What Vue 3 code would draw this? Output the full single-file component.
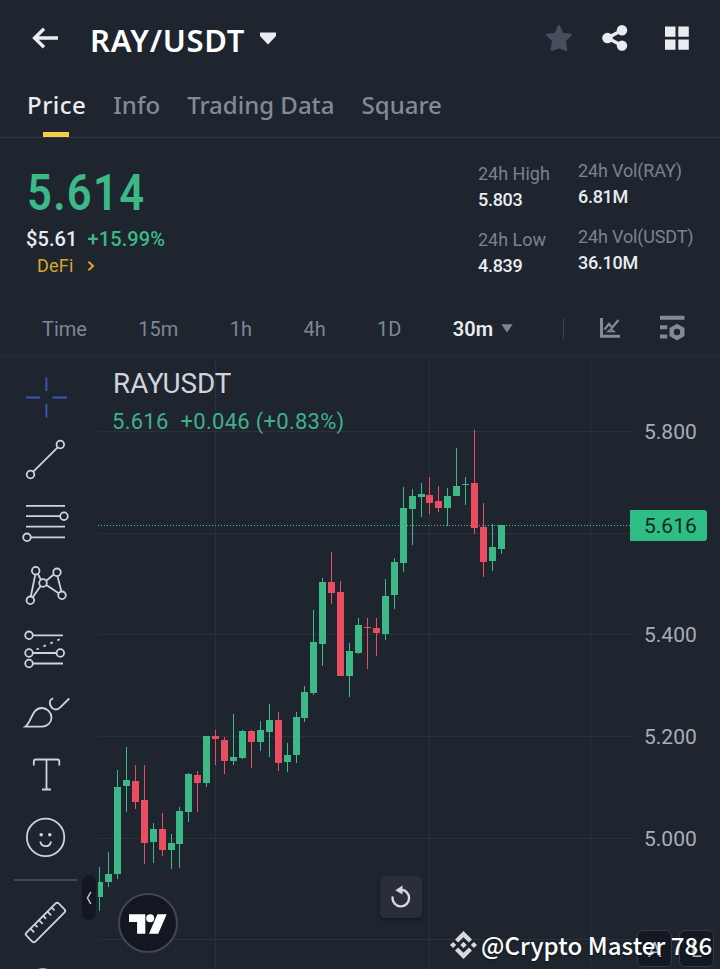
<template>
    <div class="screen">
        <header class="topbar">
            <svg class="back" width="26" height="22" viewBox="0 0 26 22">
                <path d="M12 1.8 2.6 11l9.4 9.2M3 11h23" fill="none" stroke="#eaecef" stroke-width="3.4" />
            </svg>
            <h1 class="pair" v-text="pair"></h1>
            <svg class="pair-caret" width="16" height="13" viewBox="0 0 16 13">
                <path d="M0 .5h16v3.6L8 12.6 0 4.1z" fill="#eaecef" />
            </svg>
            <div class="actions">
                <svg width="28" height="28" viewBox="0 0 28 28">
                    <path d="M14 2l3.6 7.8 8.3 1-6.1 5.9 1.6 9.3L14 23.4 6.600 26l1.600-9.300L2.100 10.800l8.300-1z" fill="#474f5e" stroke="#474f5e" stroke-width="2" stroke-linejoin="round" />
                </svg>
                <svg width="28" height="28" viewBox="0 0 28 28">
                    <path d="M21 6.200 6.500 14 21 21.600" fill="none" stroke="#eaecef" stroke-width="3.400" />
                    <circle cx="6.500" cy="14" r="5.300" fill="#eaecef" />
                    <circle cx="21" cy="6.300" r="5.200" fill="#eaecef" />
                    <circle cx="21" cy="21.600" r="5.200" fill="#eaecef" />
                </svg>
                <svg width="24" height="24" viewBox="0 0 24 24">
                    <path d="M0 .5h10.500v10.300H0zM13.300.5h10.500v10.300H13.300zM0 13.500h10.500v10.300H0zM13.300 13.500h10.500v10.300H13.300z" fill="#eaecef" />
                </svg>
            </div>
        </header>

        <nav class="tabs">
            <button v-for="tab in tabs" :key="tab" class="tab" :class="{ active: tab === activeTab }"
                @click="activeTab = tab" v-text="tab"></button>
        </nav>

        <section class="summary">
            <div class="price-box">
                <div class="last">5.614</div>
                <div class="fiat">
                    <span class="usd">$5.61</span>
                    <span class="change">+15.99%</span>
                </div>
                <div class="tag">
                    <span>DeFi</span>
                    <svg width="8" height="10" viewBox="0 0 8 10">
                        <path d="M1.500.8 6 5 1.500 9.200" fill="none" stroke="#d9a52a" stroke-width="2" />
                    </svg>
                </div>
            </div>
            <div class="stats stats-left">
                <dl v-for="s in rangeStats" :key="s.label">
                    <dt v-text="s.label"></dt>
                    <dd v-text="s.value"></dd>
                </dl>
            </div>
            <div class="stats stats-right">
                <dl v-for="s in volumeStats" :key="s.label">
                    <dt v-text="s.label"></dt>
                    <dd v-text="s.value"></dd>
                </dl>
            </div>
        </section>

        <div class="intervals">
            <button v-for="i in intervals" :key="i" class="interval" :class="{ active: i === activeInterval }"
                @click="activeInterval = i" v-text="i"></button>
            <svg class="more" width="12" height="9" viewBox="0 0 12 9">
                <path d="M.3.300h11.400L6 8.600z" fill="#7d8594" />
            </svg>
            <span class="split"></span>
            <svg class="indicator" width="20" height="20" viewBox="0 0 20 20">
                <g fill="none" stroke="#838b9a">
                    <path d="M1.500 0v18.200H20" stroke-width="3" />
                    <path d="M4.500 11.500 9 6l3.200 3.500L18.500 2" stroke-width="2.200" />
                    <path d="M8 13.500h6l-3-2.500z" stroke-width="1.500" />
                </g>
            </svg>
            <svg class="settings" width="25" height="26" viewBox="0 0 25 26">
                <path d="M0 .8h24.500v4H0zM0 10.200h7.300v4H0zM0 19.500h7.300v4H0z" fill="#838b9a" />
                <path fill-rule="evenodd" d="M17 8.700l7.500 4.200v8.200L17 25.400l-7.500-4.300v-8.200zM17 13.800a3.200 3.200 0 1 0 0 6.400 3.200 3.200 0 0 0 0-6.400z" fill="#838b9a" />
            </svg>
        </div>

        <main class="chart">
            <aside class="tools">
                <svg class="tool cross" viewBox="0 0 98 63">
                    <path d="M46.400 11.500V25M46.400 38v13.500M26 31.500h14M52.500 31.500H67" />
                </svg>
                <svg class="tool" viewBox="0 0 98 63">
                    <path d="M33.300 42.700 57.700 18.300" />
                    <circle cx="60.300" cy="15.500" r="3.800" />
                    <circle cx="30.500" cy="45.500" r="3.800" />
                </svg>
                <svg class="tool" viewBox="0 0 98 63">
                    <path d="M26 13.800h39M26 24.200h34M26 34.700h39M31 45.300h34" />
                    <circle cx="64" cy="24.200" r="3.800" />
                    <circle cx="27" cy="45.300" r="3.800" />
                </svg>
                <svg class="tool" viewBox="0 0 98 63">
                    <path d="M35.300 19.500 30.800 41.500M37.900 18.800 41 25M40.600 31 32.700 42.300M46.200 25.800 53.800 19.500M46.300 30 58.700 38.300M57.500 21.100 61.400 36.500" />
                    <circle cx="35.700" cy="15.700" r="3.800" />
                    <circle cx="57" cy="17.300" r="3.800" />
                    <circle cx="43" cy="28" r="3.800" />
                    <circle cx="30.300" cy="45.300" r="3.800" />
                    <circle cx="62" cy="40.300" r="3.800" />
                </svg>
                <svg class="tool" viewBox="0 0 98 63">
                    <path d="M33 17.300h30M33 35h23.500M33 45.500h30" />
                    <path d="M36.500 31.500 61 20.700" stroke-dasharray="2.600 5" />
                    <circle cx="29" cy="17.300" r="3.800" />
                    <circle cx="29" cy="35" r="3.800" />
                    <circle cx="60.300" cy="35" r="3.800" />
                    <circle cx="29" cy="45.500" r="3.800" />
                </svg>
                <svg class="tool" viewBox="0 0 98 63">
                    <path d="M25.300 45.700C32 40.500 31.500 27 42 27c5 0 9.500 4.500 9.500 9.500s-4 9.200-9.500 9.200z" />
                    <path d="M53.300 17.300c-3.800.8-4.300 4.200-2.600 7.700 2 4 6.500 4.600 9.300 1.700l9.200-9.200" />
                </svg>
                <svg class="tool" viewBox="0 0 98 63">
                    <path d="M33.800 21.500v-4q0-2 2-2h21.500q2 0 2 2v4M46.500 15.500v30M42 45.500h9" />
                </svg>
                <svg class="tool" viewBox="0 0 98 63">
                    <circle cx="45.600" cy="30.400" r="18.700" />
                    <path d="M40.300 34.500q.8 4.700 5.400 4.700t5.300-4.700" />
                    <circle class="dot" cx="41.200" cy="27.700" r="1.800" />
                    <circle class="dot" cx="49.800" cy="27.700" r="1.800" />
                </svg>
                <hr class="tools-line">
                <svg class="tool" viewBox="0 0 98 63">
                    <g transform="translate(45.500 31.500) rotate(-45)">
                        <rect x="-22.800" y="-6.300" width="45.600" height="12.600" rx="2.200" />
                        <path d="M-15-6.300v5.300M-9-6.300v4M-3-6.300v5.300M3-6.300v4M9-6.300v5.300M15-6.300v4" />
                    </g>
                </svg>
                <svg class="tool" viewBox="0 0 98 63">
                    <path d="M37.500 16q5.500-1.500 10.500 0" />
                </svg>
            </aside>

            <div class="plot">
                <svg class="canvas" width="622" height="611" viewBox="98 358 622 611">
                    <g stroke="#2a313b">
                        <line v-for="x in gridX" :key="'x' + x" :x1="x" :x2="x" y1="356" y2="969" />
                        <line v-for="y in gridY" :key="'y' + y" x1="98" x2="631" :y1="y" :y2="y" />
                    </g>
                    <line x1="98" x2="631" y1="525.500" y2="525.500" stroke="#3cc08f" stroke-dasharray="1 2" />
                    <g v-for="c in candles" :key="c.x" :fill="c.color">
                        <rect :x="c.x + 3" :y="c.high" width="1" :height="c.low - c.high" />
                        <rect :x="c.x" :y="c.top" width="7" :height="c.bottom - c.top" />
                    </g>
                    <g class="axis">
                        <text v-for="p in axis" :key="p.label" x="644" :y="p.y" v-text="p.label"></text>
                    </g>
                    <path d="M630 510h74a3 3 0 0 1 3 3v25a3 3 0 0 1-3 3h-74z" fill="#2ebd85" />
                    <text class="current" x="644" y="533.200">5.616</text>
                </svg>

                <div class="legend">
                    <div class="symbol">RAYUSDT</div>
                    <div class="values"><span>5.616</span><span>+0.046 (+0.83%)</span></div>
                </div>

                <button class="collapse">
                    <svg width="6" height="14" viewBox="0 0 6 14">
                        <path d="M4.800 1 1.500 7l3.300 6" fill="none" stroke="#c5c9d3" stroke-width="1.500" />
                    </svg>
                </button>

                <div class="tv">
                    <svg width="38" height="20" viewBox="0 0 38 20">
                        <path d="M0 .2h16.300v19.600H8.100V8H0zM28.400.2h9.300l-8.500 19.600H20z" fill="#fff" />
                        <circle cx="21.200" cy="4.200" r="4" fill="#fff" />
                    </svg>
                </div>

                <button class="reset">
                    <svg width="22" height="24" viewBox="0 0 22 24">
                        <path d="M2.500 12.500a8.300 8.300 0 1 0 8.500-7.700" fill="none" stroke="#d5d8e0" stroke-width="2.400" stroke-linecap="round" />
                        <path d="M5.300 5.300 12.500.5v9z" fill="#d5d8e0" />
                    </svg>
                </button>

                <div class="modes">
                    <button>A</button>
                    <button>L</button>
                </div>

                <div class="author">
                    <svg width="27" height="28" viewBox="0 0 27 28">
                        <g fill="#d8d9da">
                            <path d="M13.500 0 22 8.500l-3.100 3.100-5.400-5.400-5.400 5.400L5 8.500z" />
                            <path d="M13.500 28 5 19.500l3.100-3.100 5.400 5.400 5.400-5.400 3.100 3.100z" />
                            <path d="M3.100 10.900 6.200 14l-3.100 3.100L0 14zM23.900 10.900 27 14l-3.100 3.100-3.100-3.100zM13.500 10.800l3.200 3.200-3.200 3.200-3.200-3.200z" />
                        </g>
                    </svg>
                    <span>@Crypto Master 786</span>
                </div>
            </div>
        </main>
    </div>
</template>



<script setup>
import { ref } from 'vue';

/* header */
const pair = ref('RAY/USDT');
const tabs = ['Price', 'Info', 'Trading Data', 'Square'];
const activeTab = ref('Price');

/* 24h stats */
const rangeStats = [
    { label: '24h High', value: '5.803' },
    { label: '24h Low', value: '4.839' },
];
const volumeStats = [
    { label: '24h Vol(RAY)', value: '6.81M' },
    { label: '24h Vol(USDT)', value: '36.10M' },
];

/* intervals */
const intervals = ['Time', '15m', '1h', '4h', '1D', '30m'];
const activeInterval = ref('30m');

/* grid and price axis */
const gridX = [215.5, 429.5, 590.5];
const gridY = [431.5, 533.5, 634.5, 736.5, 838.5, 939.5];
const axis = [
    { label: '5.800', y: 439 },
    { label: '5.400', y: 642 },
    { label: '5.200', y: 744 },
    { label: '5.000', y: 846 },
];

/* candles: [left, high, body top, body bottom, low, up] */
const candles = [
    [96, 867, 882, 897, 911, 1],
    [105, 852, 874, 882, 887, 1],
    [114, 770, 787, 874, 879, 1],
    [123, 747, 780, 786, 812, 1],
    [132, 765, 781, 802, 809, 0],
    [141, 765, 800, 843, 864, 0],
    [150, 823, 829, 842, 863, 1],
    [159, 813, 829, 850, 856, 0],
    [168, 834, 843, 850, 869, 1],
    [176, 807, 811, 844, 868, 1],
    [185, 773, 774, 812, 822, 1],
    [194, 771, 775, 783, 812, 0],
    [203, 736, 736, 783, 787, 1],
    [212, 730, 736, 739, 765, 0],
    [221, 737, 740, 761, 774, 0],
    [230, 714, 757, 761, 765, 1],
    [239, 730, 731, 758, 759, 1],
    [248, 730, 731, 742, 768, 0],
    [257, 721, 730, 742, 751, 1],
    [266, 704, 720, 732, 757, 1],
    [275, 712, 720, 763, 771, 0],
    [284, 743, 755, 762, 772, 1],
    [293, 712, 717, 755, 763, 1],
    [301, 686, 692, 718, 722, 1],
    [310, 610, 642, 693, 695, 1],
    [319, 578, 582, 644, 666, 1],
    [328, 552, 582, 593, 604, 0],
    [337, 581, 592, 676, 676, 0],
    [346, 643, 651, 676, 697, 1],
    [355, 618, 625, 653, 654, 1],
    [364, 618, 627, 628, 669, 0],
    [373, 618, 628, 633, 656, 0],
    [382, 579, 596, 634, 640, 1],
    [391, 558, 562, 595, 609, 1],
    [400, 487, 508, 563, 572, 1],
    [409, 489, 496, 509, 545, 1],
    [418, 483, 494, 497, 517, 1],
    [426, 477, 495, 503, 514, 0],
    [435, 486, 501, 508, 512, 0],
    [444, 488, 496, 508, 526, 1],
    [453, 448, 486, 496, 496, 1],
    [462, 477, 484, 485, 505, 1],
    [471, 430, 483, 528, 534, 0],
    [480, 503, 527, 562, 577, 0],
    [489, 524, 547, 561, 571, 1],
    [498, 525, 525, 549, 554, 1],
].map(([x, high, top, bottom, low, up]) => ({
    x, high, top, bottom, low,
    color: up ? '#3cb986' : '#ea4d62',
}));
</script>



<style>
body {
    background: #1e252f;
}
</style>

<style scoped>
.screen {
    display: flex;
    flex-direction: column;
    width: 720px;
    height: 969px;
    overflow: hidden;
    background: #1e252f;
    color: #eaecef;
    font-family: Roboto, "Liberation Sans", sans-serif;
}

button {
    padding: 0;
    border: 0;
    background: none;
    color: inherit;
    font: inherit;
}

svg {
    display: block;
    flex: none;
}

/* header */
.topbar {
    display: flex;
    align-items: center;
    box-sizing: border-box;
    height: 78px;
    padding: 0 31px 2px 32px;
}

.pair {
    width: 155px;
    margin: 3px 0 0 32px;
    font-family: "Noto Sans", sans-serif;
    font-size: 31px;
    font-weight: 600;
    line-height: 40px;
    letter-spacing: .7px;
    white-space: nowrap;
    color: #fff;
}

.pair-caret {
    margin: 1px 0 0 15px;
}

.actions {
    display: flex;
    align-items: center;
    gap: 28px;
    margin-left: auto;
}

.actions svg:last-child {
    margin-left: 8px;
}

.tabs {
    display: flex;
    gap: 27px;
    height: 59px;
    padding-left: 27px;
    border-bottom: 1px solid #303741;
}

.tab {
    position: relative;
    padding-bottom: 6px;
    font-family: "Noto Sans", sans-serif;
    font-size: 24px;
    font-weight: 500;
    letter-spacing: 0;
    white-space: nowrap;
    color: #828a99;
}

.tab.active {
    letter-spacing: .5px;
    color: #eaecef;
}

.tab.active::after {
    content: "";
    position: absolute;
    left: 16px;
    bottom: 0;
    width: 26px;
    height: 5px;
    background: #f3d04c;
}

/* summary */
.summary {
    display: flex;
    height: 162px;
}

.price-box {
    width: 451px;
    padding: 28px 0 0 27px;
}

.last {
    font-size: 50px;
    font-weight: 600;
    line-height: 54px;
    letter-spacing: 1.5px;
    color: #3cb986;
    transform: scaleX(.87);
    transform-origin: left;
}

.fiat {
    display: flex;
    gap: 10px;
    margin: 7px 0 0 -1px;
    font-size: 20px;
    font-weight: 500;
    line-height: 24px;
    letter-spacing: .1px;
}

.change {
    color: #3cb986;
}

.tag {
    display: flex;
    align-items: center;
    gap: 14px;
    margin-top: 4px;
    padding-left: 10px;
    font-size: 18px;
    line-height: 22px;
    letter-spacing: .2px;
    color: #d9a52a;
}

.stats {
    display: flex;
    flex-direction: column;
    gap: 14px;
    font-size: 18px;
}

.stats-left {
    width: 100px;
    padding-top: 23px;
}

.stats-right {
    padding-top: 20px;
    letter-spacing: -.15px;
}

.stats dl,
.stats dd {
    margin: 0;
}

.stats dt,
.stats dd {
    line-height: 26px;
    white-space: nowrap;
}

.stats dt {
    color: #7a8291;
}

.stats dd {
    font-weight: 500;
    letter-spacing: -.3px;
}

/* intervals */
.intervals {
    display: flex;
    align-items: center;
    box-sizing: border-box;
    height: 58px;
    padding: 2px 35px 0 42px;
    border-bottom: 4px solid #252b35;
    font-size: 20px;
    color: #7f8796;
}

.interval {
    padding-top: 1px;
}

.interval + .interval {
    margin-left: 51.4px;
}

.interval.active {
    font-weight: 600;
    color: #eaecef;
}

.more {
    margin-left: 8px;
}

.split {
    width: 1px;
    height: 21px;
    margin-left: 50px;
    background: #3d4552;
}

.indicator {
    margin-left: 36px;
}

.settings {
    margin-left: auto;
}

/* drawing tools */
.chart {
    display: flex;
    height: 611px;
}

.tools {
    display: flex;
    flex-direction: column;
    width: 98px;
    padding-top: 8px;
    overflow: hidden;
}

.tool {
    width: 98px;
    height: 63px;
    fill: none;
    stroke: #cfd3dd;
    stroke-width: 1.8;
}

.tool .dot {
    fill: #cfd3dd;
    stroke: none;
}

.cross {
    stroke: #3659c4;
}

.tools-line {
    flex: none;
    width: 63px;
    height: 2px;
    margin: 9px 0 10px 14px;
    border: 0;
    background: #434954;
}

/* plot */
.plot {
    position: relative;
    width: 622px;
}

.axis {
    font-size: 21px;
    fill: #a9adb7;
}

.current {
    font-size: 21px;
    fill: #10291f;
}

.legend {
    position: absolute;
    left: 14px;
    top: 10px;
    white-space: nowrap;
}

.symbol {
    margin-left: 1px;
    font-size: 27.8px;
    line-height: 32px;
    color: #d1d4dc;
}

.values {
    display: flex;
    gap: 12px;
    margin-top: 9px;
    font-size: 22px;
    line-height: 26px;
    letter-spacing: .27px;
    color: #40b08a;
}

.collapse {
    position: absolute;
    left: -16px;
    top: 517px;
    display: flex;
    align-items: center;
    justify-content: center;
    width: 14px;
    height: 45px;
    border-radius: 7px;
    background: #131722;
}

.tv {
    position: absolute;
    left: 20px;
    top: 535px;
    display: flex;
    align-items: center;
    justify-content: center;
    box-sizing: border-box;
    width: 60px;
    height: 60px;
    padding-top: 1px;
    border: 2px solid #434651;
    border-radius: 50%;
    background: #131722;
}

.reset {
    position: absolute;
    left: 282px;
    top: 518px;
    display: flex;
    align-items: center;
    justify-content: center;
    width: 42px;
    height: 42px;
    border-radius: 5px;
    background: #2a2e39;
    box-shadow: 0 2px 4px rgba(0, 0, 0, .4);
}

.modes {
    position: absolute;
    left: 539px;
    top: 572px;
    display: flex;
    gap: 7px;
}

.modes button {
    box-sizing: border-box;
    width: 35px;
    height: 37px;
    padding-top: 2px;
    border: 1px solid #363a45;
    border-radius: 6px;
    background: #141823;
    font-size: 21px;
    color: #b8bcc6;
}

.author {
    position: absolute;
    left: 352px;
    top: 569px;
    display: flex;
    align-items: center;
    gap: 4px;
    font-family: "Noto Sans CJK SC", sans-serif;
    font-size: 24px;
    font-weight: 500;
    line-height: 36px;
    letter-spacing: .08px;
    white-space: nowrap;
    color: #fff;
    text-shadow: 0 1px 2px rgba(0, 0, 0, .4);
}
</style>
